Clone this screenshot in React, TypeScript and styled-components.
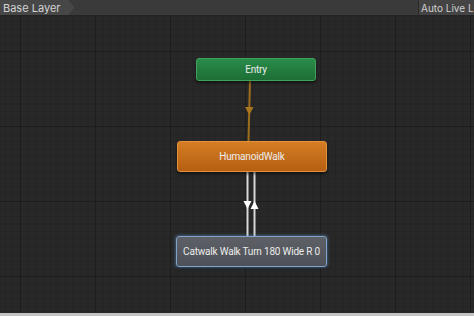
import React from "react";
import styled, { createGlobalStyle } from "styled-components";

const Global = createGlobalStyle`
  html, body { margin: 0; padding: 0; background: #282828; overflow: hidden; }
  * { box-sizing: border-box; }
`;

const Page = styled.div`
  width: 474px;
  height: 316px;
  display: flex;
  flex-direction: column;
  font-family: Inter, "Noto Sans", sans-serif;
  overflow: hidden;
`;

const Toolbar = styled.div`
  height: 16px;
  flex: none;
  display: flex;
  align-items: stretch;
  background: #3a3a3a;
  border-bottom: 1px solid #232323;
`;

const Crumb = styled.div`
  height: 100%;
  padding: 0 14px 0 3px;
  display: flex;
  align-items: center;
  background: #474747;
  color: #d4d4d4;
  font-size: 11px;
  clip-path: polygon(0 0, calc(100% - 6px) 0, 100% 50%, calc(100% - 6px) 100%, 0 100%);
`;

const Spacer = styled.div`
  flex: 1;
`;

const ToolButton = styled.div`
  display: flex;
  align-items: center;
  padding: 0 0 0 2px;
  width: 56px;
  white-space: nowrap;
  background: #444444;
  border-left: 1px solid #2a2a2a;
  color: #cfcfcf;
  font-size: 10px;
`;

const Canvas = styled.div`
  position: relative;
  flex: 1;
  background-color: #282828;
  background-image:
    linear-gradient(to right, #1d1d1d 1px, transparent 1px),
    linear-gradient(to bottom, #1d1d1d 1px, transparent 1px),
    linear-gradient(to right, #242424 1px, transparent 1px),
    linear-gradient(to bottom, #242424 1px, transparent 1px);
  background-size: 75px 75px, 75px 75px, 7.5px 7.5px, 7.5px 7.5px;
  background-position: 20px 35px, 20px 35px, 5px 5px, 5px 5px;
`;

const BottomStrip = styled.div`
  height: 3px;
  flex: none;
  background: #c4c4c4;
`;

type Kind = "entry" | "default" | "selected";

const Node = styled.div<{ $kind: Kind; $x: number; $y: number; $w: number; $h: number }>`
  position: absolute;
  left: ${(p) => p.$x}px;
  top: ${(p) => p.$y}px;
  width: ${(p) => p.$w}px;
  height: ${(p) => p.$h}px;
  border-radius: 3px;
  display: flex;
  align-items: center;
  justify-content: center;
  font-family: Roboto, "Noto Sans", sans-serif;
  font-size: 10px;
  letter-spacing: -0.2px;
  color: #ececec;
  white-space: nowrap;
  background: ${(p) =>
    p.$kind === "entry"
      ? "linear-gradient(#2a8c49, #1d6e35)"
      : p.$kind === "default"
      ? "linear-gradient(#d47d24, #b65f12)"
      : "linear-gradient(#5d6066, #4e5157)"};
  border: 1px solid
    ${(p) => (p.$kind === "entry" ? "#3fa35e" : p.$kind === "default" ? "#e2913d" : "#7ea4cc")};
  box-shadow: ${(p) =>
    p.$kind === "selected"
      ? "0 0 3px 1px rgba(110,160,215,0.45), 0 2px 3px rgba(0,0,0,0.5)"
      : "0 2px 3px rgba(0,0,0,0.5)"};
`;

const Wires = styled.svg`
  position: absolute;
  left: 0;
  top: 0;
  width: 474px;
  height: 297px;
  pointer-events: none;
`;

export default function App() {
  const o = 17;
  return (
    <Page>
      <Global />
      <Toolbar>
        <Crumb>Base Layer</Crumb>
        <Spacer />
        <ToolButton>Auto Live L</ToolButton>
      </Toolbar>
      <Canvas>
        <Wires viewBox="0 0 474 297">
          <line x1={250} y1={81 - o} x2={248.5} y2={142 - o} stroke="#9c6d1c" strokeWidth={2} />
          <polygon points={`245,${108 - o} 253.5,${108 - o} 249.3,${116 - o}`} fill="#a8761e" />
          <line x1={247.5} y1={172 - o} x2={247.5} y2={237 - o} stroke="#d8d8d8" strokeWidth={2} />
          <line x1={254.5} y1={172 - o} x2={254.5} y2={237 - o} stroke="#d8d8d8" strokeWidth={2} />
          <polygon points={`243.5,${202 - o} 251.5,${202 - o} 247.5,${210 - o}`} fill="#ffffff" />
          <polygon points={`250.5,${210 - o} 258.5,${210 - o} 254.5,${202 - o}`} fill="#ffffff" />
        </Wires>
        <Node $kind="entry" $x={196} $y={59 - o} $w={120} $h={23}>
          Entry
        </Node>
        <Node $kind="default" $x={177} $y={142 - o} $w={150} $h={31}>
          HumanoidWalk
        </Node>
        <Node $kind="selected" $x={176} $y={237 - o} $w={151} $h={31}>
          Catwalk Walk Turn 180 Wide R 0
        </Node>
      </Canvas>
      <BottomStrip />
    </Page>
  );
}
